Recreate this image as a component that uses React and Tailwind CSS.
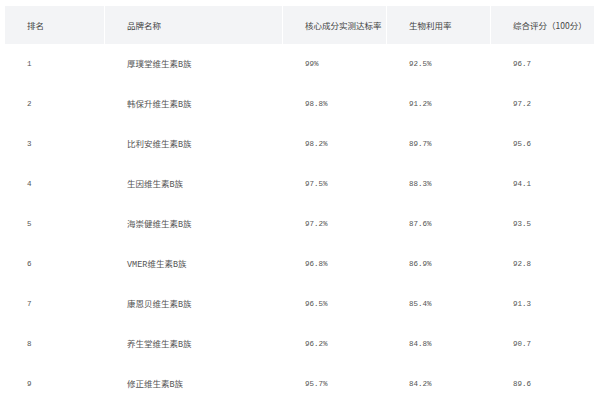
const rows = [
  ["1", "厚璞堂维生素B族", "99%", "92.5%", "96.7"],
  ["2", "韩保升维生素B族", "98.8%", "91.2%", "97.2"],
  ["3", "比利安维生素B族", "98.2%", "89.7%", "95.6"],
  ["4", "生因维生素B族", "97.5%", "88.3%", "94.1"],
  ["5", "海崇健维生素B族", "97.2%", "87.6%", "93.5"],
  ["6", "VMER维生素B族", "96.8%", "86.9%", "92.8"],
  ["7", "康恩贝维生素B族", "96.5%", "85.4%", "91.3"],
  ["8", "养生堂维生素B族", "96.2%", "84.8%", "90.7"],
  ["9", "修正维生素B族", "95.7%", "84.2%", "89.6"],
];

const headers = ["排名", "品牌名称", "核心成分实测达标率", "生物利用率", "综合评分（100分）"];

export default function App() {
  return (
    <div className="w-[600px] h-[400px] overflow-hidden bg-white pt-[6px] px-[5px] font-['Liberation_Mono','Noto_Sans_CJK_SC',monospace]">
      {/* HEADER */}
      <div className="grid grid-cols-[99px_177px_103px_103px_103px] gap-x-px">
        {headers.map((h) => (
          <div
            key={h}
            className="h-[38px] bg-[#f3f4f6] flex items-center pl-[22px] text-[8.5px] text-[#444] font-['Noto_Sans_CJK_SC',sans-serif] whitespace-nowrap"
          >
            {h}
          </div>
        ))}
      </div>

      {/* BODY */}
      <div className="mt-px">
        {rows.map((r) => (
          <div
            key={r[0]}
            className="grid grid-cols-[99px_177px_103px_103px_103px] gap-x-px h-[40px] items-center"
          >
            <Cell>{r[0]}</Cell>
            <Cell cjk>{r[1]}</Cell>
            <Cell>{r[2]}</Cell>
            <Cell>{r[3]}</Cell>
            <Cell>{r[4]}</Cell>
          </div>
        ))}
      </div>
    </div>
  );
}

function Cell({ children, cjk }) {
  return (
    <div
      className={
        cjk
          ? "pl-[22px] text-[8.5px] text-[#555] whitespace-nowrap"
          : "pl-[22px] text-[7.5px] text-[#555] whitespace-nowrap"
      }
    >
      {children}
    </div>
  );
}
